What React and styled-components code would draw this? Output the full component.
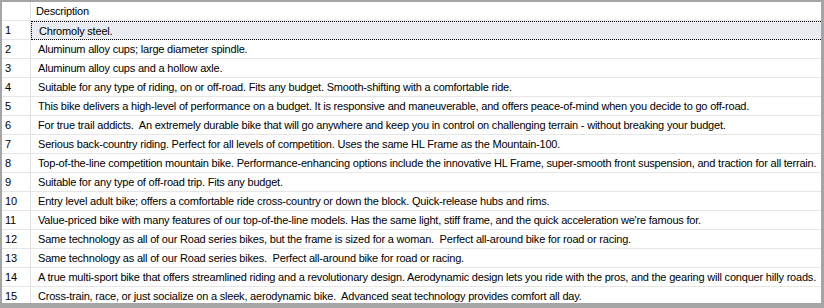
import { createGlobalStyle } from "styled-components";
import styled from "styled-components";

const GlobalStyle = createGlobalStyle`
  html, body {
    margin: 0;
    padding: 0;
    background: #ffffff;
  }
  body {
    font-family: "Liberation Sans", Arial, sans-serif;
    font-size: 11px;
    letter-spacing: -0.2px;
    color: #000000;
  }
`

const Frame = styled.div`
  width: 824px;
  height: 308px;
  box-sizing: border-box;
  border-style: solid;
  border-color: #a5a5a5;
  border-width: 2px 3px 5px 2px;
  background: #ffffff;
  overflow: hidden;
`

const Row = styled.div`
  display: flex;
  height: 18px;
  border-bottom: 1px solid #e6e6e6;
  box-sizing: content-box;
`

const NumCell = styled.div`
  width: 25px;
  flex: none;
  border-right: 1px solid #e0e0e0;
  padding-left: 3px;
  display: flex;
  align-items: center;
  white-space: nowrap;
`

const Cell = styled.div`
  flex: 1;
  min-width: 0;
  display: flex;
  align-items: center;
  white-space: nowrap;
  overflow: hidden;
  box-sizing: border-box;
  padding-left: ${(p) => (p.$header ? "5px" : "7px")};
  background: ${(p) => (p.$selected ? "#e8ecf1" : "transparent")};
  border: 1px dotted ${(p) => (p.$selected ? "#000000" : "transparent")};
  border-right: none;
  border-left-width: ${(p) => (p.$selected ? "1px" : "0")};
  margin-bottom: ${(p) => (p.$selected ? "-1px" : "0")};
`

const rows = [
  "Chromoly steel.",
  "Aluminum alloy cups; large diameter spindle.",
  "Aluminum alloy cups and a hollow axle.",
  "Suitable for any type of riding, on or off-road. Fits any budget. Smooth-shifting with a comfortable ride.",
  "This bike delivers a high-level of performance on a budget. It is responsive and maneuverable, and offers peace-of-mind when you decide to go off-road.",
  "For true trail addicts.  An extremely durable bike that will go anywhere and keep you in control on challenging terrain - without breaking your budget.",
  "Serious back-country riding. Perfect for all levels of competition. Uses the same HL Frame as the Mountain-100.",
  "Top-of-the-line competition mountain bike. Performance-enhancing options include the innovative HL Frame, super-smooth front suspension, and traction for all terrain.",
  "Suitable for any type of off-road trip. Fits any budget.",
  "Entry level adult bike; offers a comfortable ride cross-country or down the block. Quick-release hubs and rims.",
  "Value-priced bike with many features of our top-of-the-line models. Has the same light, stiff frame, and the quick acceleration we're famous for.",
  "Same technology as all of our Road series bikes, but the frame is sized for a woman.  Perfect all-around bike for road or racing.",
  "Same technology as all of our Road series bikes.  Perfect all-around bike for road or racing.",
  "A true multi-sport bike that offers streamlined riding and a revolutionary design. Aerodynamic design lets you ride with the pros, and the gearing will conquer hilly roads.",
  "Cross-train, race, or just socialize on a sleek, aerodynamic bike.  Advanced seat technology provides comfort all day.",
]

function App() {
  return (
    <>
      <GlobalStyle />
      <Frame>
        <Row>
          <NumCell />
          <Cell $header>Description</Cell>
        </Row>
        {rows.map((text, i) => (
          <Row key={i}>
            <NumCell>{i + 1}</NumCell>
            <Cell $selected={i === 0}>{text.replace(/  /g, "\u00a0 ")}</Cell>
          </Row>
        ))}
      </Frame>
    </>
  );
}

export default App;
